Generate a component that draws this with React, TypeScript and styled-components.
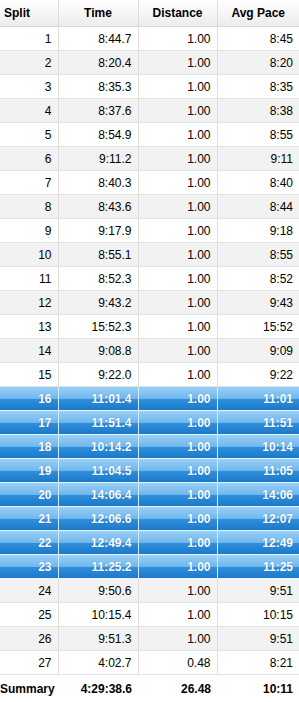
import styled, { createGlobalStyle, css } from 'styled-components';

const GlobalStyle = createGlobalStyle`
  html, body {
    margin: 0;
    padding: 0;
    background: #ffffff;
  }
  body {
    font-family: 'Liberation Sans', Arial, sans-serif;
    font-size: 12px;
    color: #000;
  }
`;

const Table = styled.table`
  width: 299px;
  border-collapse: collapse;
  table-layout: fixed;
`;

const HeadCell = styled.th<{ $left?: boolean }>`
  height: 26px;
  padding: 0 4px;
  font-weight: bold;
  font-size: 12px;
  text-align: ${(p) => (p.$left ? 'left' : 'center')};
  background: linear-gradient(#ffffff, #ececec);
  border-left: 1px solid #dcdcdc;
  border-bottom: 1px solid #d8d8d8;
  &:first-child {
    border-left: none;
  }
`;

const Row = styled.tr<{ $shade?: boolean; $hot?: boolean }>`
  height: 24px;
  background: ${(p) => (p.$shade ? '#f2f2f2' : '#ffffff')};
  ${(p) =>
    p.$hot &&
    css`
      background: linear-gradient(
        #9ad0f8 0%,
        #6fb7ef 48%,
        #2f8edb 52%,
        #1a77c8 100%
      );
      color: #ffffff;
      font-weight: bold;
      text-shadow: 0 0 1px rgba(0, 50, 110, 0.5);
    `}
`;

const Cell = styled.td<{ $hot?: boolean }>`
  padding: 0 6px 0 0;
  text-align: right;
  border-left: 1px solid ${(p) => (p.$hot ? '#d6ebfb' : '#dedede')};
  border-bottom: 1px solid ${(p) => (p.$hot ? '#e8f4fd' : '#e2e2e2')};
  &:first-child {
    border-left: none;
  }
`;

const SumCell = styled.td`
  height: 28px;
  padding: 0 6px 0 0;
  text-align: right;
  font-weight: bold;
  &:first-child {
    text-align: left;
    padding: 0;
  }
`;

const splits: [string, string, string][] = [
  ['8:44.7', '1.00', '8:45'],
  ['8:20.4', '1.00', '8:20'],
  ['8:35.3', '1.00', '8:35'],
  ['8:37.6', '1.00', '8:38'],
  ['8:54.9', '1.00', '8:55'],
  ['9:11.2', '1.00', '9:11'],
  ['8:40.3', '1.00', '8:40'],
  ['8:43.6', '1.00', '8:44'],
  ['9:17.9', '1.00', '9:18'],
  ['8:55.1', '1.00', '8:55'],
  ['8:52.3', '1.00', '8:52'],
  ['9:43.2', '1.00', '9:43'],
  ['15:52.3', '1.00', '15:52'],
  ['9:08.8', '1.00', '9:09'],
  ['9:22.0', '1.00', '9:22'],
  ['11:01.4', '1.00', '11:01'],
  ['11:51.4', '1.00', '11:51'],
  ['10:14.2', '1.00', '10:14'],
  ['11:04.5', '1.00', '11:05'],
  ['14:06.4', '1.00', '14:06'],
  ['12:06.6', '1.00', '12:07'],
  ['12:49.4', '1.00', '12:49'],
  ['11:25.2', '1.00', '11:25'],
  ['9:50.6', '1.00', '9:51'],
  ['10:15.4', '1.00', '10:15'],
  ['9:51.3', '1.00', '9:51'],
  ['4:02.7', '0.48', '8:21'],
];

const App = () => {
  return (
    <>
      <GlobalStyle />
      <Table>
        <colgroup>
          <col style={{ width: 58 }} />
          <col style={{ width: 80 }} />
          <col style={{ width: 79 }} />
          <col style={{ width: 82 }} />
        </colgroup>
        <thead>
          <tr>
            <HeadCell $left>Split</HeadCell>
            <HeadCell>Time</HeadCell>
            <HeadCell>Distance</HeadCell>
            <HeadCell>Avg Pace</HeadCell>
          </tr>
        </thead>
        <tbody>
          {splits.map(([time, dist, pace], i) => {
            const n = i + 1;
            const hot = n >= 16 && n <= 23;
            return (
              <Row key={n} $shade={n % 2 === 0} $hot={hot}>
                <Cell $hot={hot}>{n}</Cell>
                <Cell $hot={hot}>{time}</Cell>
                <Cell $hot={hot}>{dist}</Cell>
                <Cell $hot={hot}>{pace}</Cell>
              </Row>
            );
          })}
          <tr>
            <SumCell>Summary</SumCell>
            <SumCell>4:29:38.6</SumCell>
            <SumCell>26.48</SumCell>
            <SumCell>10:11</SumCell>
          </tr>
        </tbody>
      </Table>
    </>
  );
};

export default App;
